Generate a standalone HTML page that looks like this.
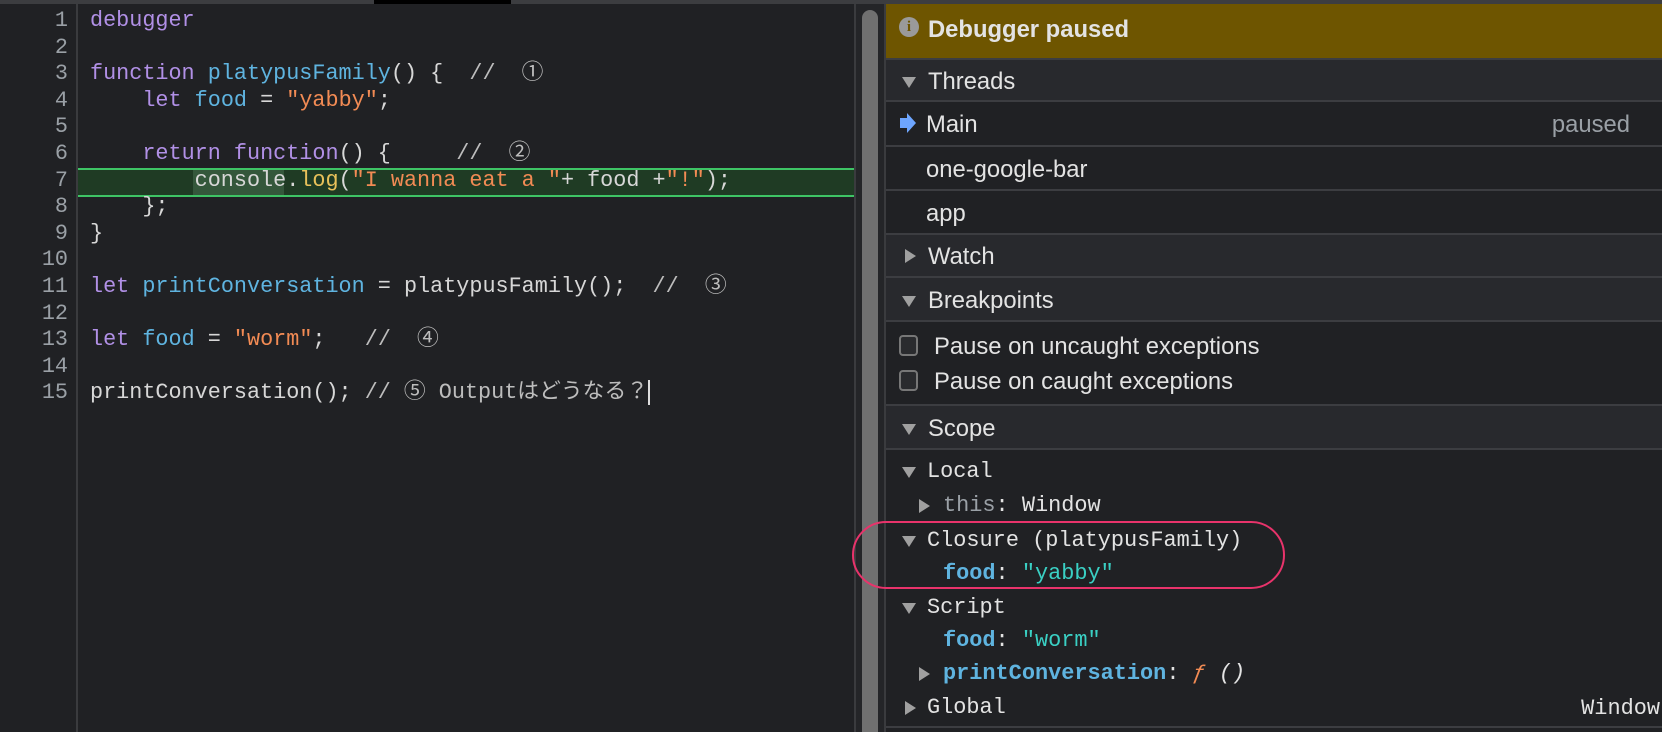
<!DOCTYPE html>
<html><head><meta charset="utf-8"><style>
*{margin:0;padding:0;box-sizing:border-box}
body{width:1662px;height:732px;background:#202124;position:relative;overflow:hidden;font-family:"Liberation Sans","Noto Sans CJK JP",sans-serif;color:#e3e3e3}
.abs{position:absolute}
.mono{font-family:"Liberation Mono","Noto Sans CJK JP",monospace;font-size:21.8px;white-space:pre}
.ln{position:absolute;right:0;width:60px;text-align:right;color:#9aa0a6}
.cl{position:absolute;left:90px;color:#d7d7d7}
.k{color:#b190e6}.v{color:#5fb4e0}.s{color:#f28b54}.c{color:#bdbdbd}
.sec{position:absolute;left:886px;right:0;border-bottom:2px solid #3c3d41}
.hd{background:#28292d}
.tri{position:absolute;width:0;height:0;border-left:7px solid transparent;border-right:7px solid transparent;border-top:11px solid #a0a0a0}
.tr{position:absolute;width:0;height:0;border-top:7px solid transparent;border-bottom:7px solid transparent;border-left:11px solid #a0a0a0}
.t{position:absolute;font-size:23.8px;color:#e3e3e3}
.sm{position:absolute;font-family:"Liberation Mono",monospace;font-size:21.9px;white-space:pre;color:#e3e3e3}
.cb{position:absolute;width:19px;height:21px;border:2px solid #777;border-radius:4px;background:#2a2b2e}
</style></head><body>
<div class="abs" style="left:0;top:0;width:1662px;height:4px;background:#3c3d40"></div>
<div class="abs" style="left:374px;top:0;width:137px;height:4px;background:#000"></div>
<div class="abs" style="left:0;top:4px;width:78px;height:728px;border-right:2px solid #3a3b3e"></div>
<div class="abs" style="left:78px;top:168px;width:777px;height:29px;background:#1f3b24;border-top:2px solid #3ec465;border-bottom:2px solid #3ec465"></div>
<div class="abs" style="left:193px;top:170px;width:91px;height:25px;background:#34573b"></div>
<div class="mono" style="position:absolute;left:0;top:8px;width:855px;line-height:26.6px">
<div class="ln" style="left:8px;top:0">1</div><div class="ln" style="left:8px;top:26.6px">2</div><div class="ln" style="left:8px;top:53.2px">3</div><div class="ln" style="left:8px;top:79.8px">4</div><div class="ln" style="left:8px;top:106.4px">5</div><div class="ln" style="left:8px;top:133px">6</div><div class="ln" style="left:8px;top:159.6px">7</div><div class="ln" style="left:8px;top:186.2px">8</div><div class="ln" style="left:8px;top:212.8px">9</div><div class="ln" style="left:8px;top:239.4px">10</div><div class="ln" style="left:8px;top:266px">11</div><div class="ln" style="left:8px;top:292.6px">12</div><div class="ln" style="left:8px;top:319.2px">13</div><div class="ln" style="left:8px;top:345.8px">14</div><div class="ln" style="left:8px;top:372.4px">15</div>
<div class="cl" style="top:0"><span class="k">debugger</span></div>
<div class="cl" style="top:53.2px"><span class="k">function</span> <span class="v">platypusFamily</span>() {  <span class="c">//  ①</span></div>
<div class="cl" style="top:79.8px">    <span class="k">let</span> <span class="v">food</span> = <span class="s">"yabby"</span>;</div>
<div class="cl" style="top:133px">    <span class="k">return</span> <span class="k">function</span>() {     <span class="c">//  ②</span></div>
<div class="cl" style="top:159.6px">        console.<span style="color:#e8c15a">log</span>(<span class="s">"I wanna eat a "</span>+ food +<span class="s">"!"</span>);</div>
<div class="cl" style="top:186.2px">    };</div>
<div class="cl" style="top:212.8px">}</div>
<div class="cl" style="top:266px"><span class="k">let</span> <span class="v">printConversation</span> = platypusFamily();  <span class="c">//  ③</span></div>
<div class="cl" style="top:319.2px"><span class="k">let</span> <span class="v">food</span> = <span class="s">"worm"</span>;   <span class="c">//  ④</span></div>
<div class="cl" style="top:372.4px">printConversation(); <span class="c">// ⑤ Outputはどうなる？</span><span style="border-left:2px solid #ddd"></span></div>
</div>
<div class="abs" style="left:854px;top:4px;width:32px;height:728px;background:#242528;border-left:2px solid #3a3b3e;border-right:2px solid #3a3b3e"></div>
<div class="abs" style="left:862px;top:10px;width:16px;height:722px;background:#707070;border-radius:8px 8px 0 0"></div>
<div class="sec" style="top:4px;height:56px;background:#6e5500;border-bottom:2px solid #3c3d41"></div>
<div class="abs" style="left:899px;top:17px;width:20px;height:20px;border-radius:50%;background:#9a9a9a;color:#6e5500;font:bold 15px 'Liberation Serif',serif;text-align:center;line-height:20px">i</div>
<div class="t" style="left:928px;top:16px;font-weight:bold">Debugger paused</div>
<div class="sec hd" style="top:60px;height:42px"></div>
<div class="tri" style="left:902px;top:77px"></div><div class="t" style="left:928px;top:68px">Threads</div>
<div class="sec" style="top:102px;height:45px"></div>
<svg class="abs" style="left:900px;top:113px" width="16" height="20"><path d="M0 5h7V0l9 10-9 10v-5H0z" fill="#6ea6ff"/></svg>
<div class="t" style="left:926px;top:111px">Main</div><div class="t" style="right:32px;top:111px;color:#9aa0a6">paused</div>
<div class="sec" style="top:147px;height:44px"></div>
<div class="t" style="left:926px;top:156px">one-google-bar</div>
<div class="sec" style="top:191px;height:44px"></div>
<div class="t" style="left:926px;top:200px">app</div>
<div class="sec hd" style="top:235px;height:43px"></div>
<div class="tr" style="left:905px;top:249px"></div><div class="t" style="left:928px;top:243px">Watch</div>
<div class="sec hd" style="top:278px;height:44px"></div>
<div class="tri" style="left:902px;top:296px"></div><div class="t" style="left:928px;top:287px">Breakpoints</div>
<div class="sec" style="top:322px;height:84px"></div>
<div class="cb" style="left:899px;top:335px"></div><div class="t" style="left:934px;top:333px">Pause on uncaught exceptions</div>
<div class="cb" style="left:899px;top:370px"></div><div class="t" style="left:934px;top:368px">Pause on caught exceptions</div>
<div class="sec hd" style="top:406px;height:44px"></div>
<div class="tri" style="left:902px;top:424px"></div><div class="t" style="left:928px;top:415px">Scope</div>
<div class="sec" style="top:450px;height:278px"></div>
<div class="tri" style="left:902px;top:467px"></div><div class="sm" style="left:927px;top:459px">Local</div>
<div class="tr" style="left:919px;top:499px"></div><div class="sm" style="left:943px;top:493px"><span style="color:#9aa0a6">this</span>: Window</div>
<div class="tri" style="left:902px;top:536px"></div><div class="sm" style="left:927px;top:528px">Closure (platypusFamily)</div>
<div class="sm" style="left:943px;top:561px"><span style="color:#5fb4e0;font-weight:bold">food</span>: <span style="color:#3ad0c4">"yabby"</span></div>
<div class="tri" style="left:902px;top:603px"></div><div class="sm" style="left:927px;top:595px">Script</div>
<div class="sm" style="left:943px;top:628px"><span style="color:#5fb4e0;font-weight:bold">food</span>: <span style="color:#3ad0c4">"worm"</span></div>
<div class="tr" style="left:919px;top:667px"></div><div class="sm" style="left:943px;top:661px"><span style="color:#5fb4e0;font-weight:bold">printConversation</span>: <span style="color:#f28b54;font-style:italic">ƒ</span> <i>()</i></div>
<div class="tr" style="left:905px;top:701px"></div><div class="sm" style="left:927px;top:695px">Global</div>
<div class="sm" style="right:2px;top:696px">Window</div>
<div class="abs" style="left:852px;top:521px;width:433px;height:68px;border:2px solid #e8336b;border-radius:34px"></div>
</body></html>
